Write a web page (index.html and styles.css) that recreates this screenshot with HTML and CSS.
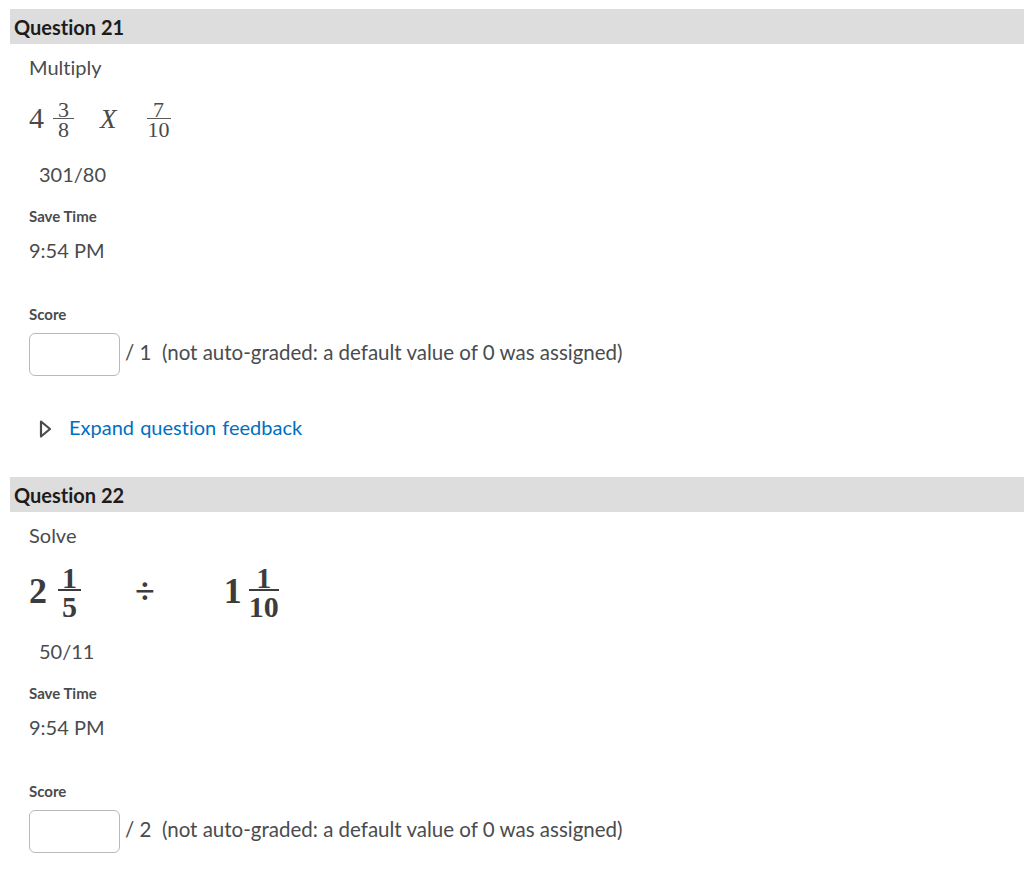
FILE: index.html
```html
<!DOCTYPE html>
<html>
<head>
<meta charset="utf-8">
<link rel="stylesheet" href="styles.css">
</head>
<body>
<div class="page">
  <section class="question q21">
    <h2 class="q-head">Question 21</h2>
    <div class="q-body">
      <p class="prompt">Multiply</p>
      <div class="math m21">
        <span class="whole">4</span>
        <span class="frac f-a"><span class="num">3</span><span class="den">8</span></span>
        <span class="op-x">X</span>
        <span class="frac f-b"><span class="num">7</span><span class="den">10</span></span>
      </div>
      <p class="answer">301/80</p>
      <p class="label label-save">Save Time</p>
      <p class="value">9:54 PM</p>
      <p class="label label-score">Score</p>
      <div class="score-row">
        <span class="score-input"></span>
        <span class="score-text">/ 1&nbsp; (not auto-graded: a default value of 0 was assigned)</span>
      </div>
      <div class="expand-row">
        <svg class="tri" width="14" height="20" viewBox="0 0 14 20"><path d="M3 2.5 L12 10 L3 17.5 Z" fill="none" stroke="#494c4e" stroke-width="2.2" stroke-linejoin="round"/></svg>
        <a class="expand-link" href="#">Expand question feedback</a>
      </div>
    </div>
  </section>
  <section class="question q22">
    <h2 class="q-head">Question 22</h2>
    <div class="q-body">
      <p class="prompt">Solve</p>
      <div class="math m22">
        <span class="whole">2</span>
        <span class="frac f-c"><span class="num">1</span><span class="den">5</span></span>
        <span class="op-div">÷</span>
        <span class="whole whole-b">1</span>
        <span class="frac f-d"><span class="num">1</span><span class="den">10</span></span>
      </div>
      <p class="answer answer-b">50/11</p>
      <p class="label label-save">Save Time</p>
      <p class="value">9:54 PM</p>
      <p class="label label-score">Score</p>
      <div class="score-row">
        <span class="score-input"></span>
        <span class="score-text">/ 2&nbsp; (not auto-graded: a default value of 0 was assigned)</span>
      </div>
    </div>
  </section>
</div>
</body>
</html>
```
FILE: styles.css
```css
html, body {
  margin: 0;
  padding: 0;
  background: #ffffff;
}
body {
  font-family: Lato, "Open Sans", sans-serif;
  color: #494c4e;
  font-variant-ligatures: none;
}
.page {
  padding: 9px 0 0 10px;
}
p, h2 {
  margin: 0;
}
.q-head {
  background: #dddddd;
  height: 34px;
  padding-top: 1px;
  line-height: 35px;
  padding-left: 4px;
  font-size: 20px;
  font-weight: 700;
  color: #1c1c1c;
}
.q-body {
  padding-left: 19px;
}
.prompt {
  font-size: 20px;
  line-height: 24px;
  margin-top: 11px;
}
.math {
  display: flex;
  align-items: flex-start;
  font-family: "Liberation Serif", "Times New Roman", serif;
}
.frac {
  display: inline-flex;
  flex-direction: column;
  align-items: center;
}

/* Question 21 expression */
.m21 {
  margin-top: 23px;
  height: 37px;
  color: #4a4a4a;
}
.m21 .whole {
  font-size: 30px;
  line-height: 22px;
  margin-top: 5px;
}
.m21 .frac .num {
  font-size: 22px;
  line-height: 16px;
  align-self: stretch;
  text-align: center;
  border-bottom: 1px solid #5a5a5a;
}
.m21 .frac .den {
  font-size: 22px;
  line-height: 18px;
  padding-top: 2px;
}
.f-a {
  margin-left: 9px;
  padding: 0 5px;
}
.f-a .num { margin: 0 -5px; }
.op-x {
  font-style: italic;
  font-size: 27px;
  line-height: 22px;
  margin-top: 6px;
  margin-left: 26px;
}
.f-b {
  margin-left: 30px;
  padding: 0 1px;
}
.f-b .num { margin: 0 -1px; }

/* Question 22 expression */
.m22 {
  margin-top: 20px;
  height: 53px;
  color: #3c3c3c;
  font-weight: 700;
}
.m22 .whole {
  font-size: 36px;
  line-height: 30px;
  margin-top: 9px;
}
.m22 .frac .num {
  font-size: 30px;
  line-height: 22px;
  align-self: stretch;
  text-align: center;
  border-bottom: 2px solid #3c3c3c;
}
.m22 .frac .den {
  font-size: 30px;
  line-height: 26px;
  padding-top: 3px;
}
.f-c {
  margin-left: 11px;
  padding: 0 4px;
}
.f-c .num { margin: 0 -4px; }
.op-div {
  font-size: 36px;
  line-height: 30px;
  margin-top: 9px;
  margin-left: 54px;
}
.m22 .whole-b {
  margin-left: 69px;
}
.f-d {
  margin-left: 7px;
}

.answer {
  font-size: 20px;
  line-height: 24px;
  margin-top: 23px;
  padding-left: 10px;
}
.answer-b {
  margin-top: 19px;
}
.label {
  font-size: 15px;
  line-height: 18px;
  font-weight: 700;
}
.label-save {
  margin-top: 21px;
}
.value {
  font-size: 20px;
  line-height: 24px;
  margin-top: 13px;
}
.label-score {
  margin-top: 43px;
}
.score-row {
  display: flex;
  align-items: center;
  margin-top: 10px;
  height: 43px;
}
.score-input {
  box-sizing: border-box;
  width: 91px;
  height: 43px;
  border: 1px solid #b9b9b9;
  border-radius: 6px;
  background: #fff;
}
.score-text {
  font-size: 20.5px;
  line-height: 24px;
  margin-left: 5px;
  margin-bottom: 5px;
}
.expand-row {
  display: flex;
  align-items: center;
  margin-top: 39px;
  height: 24px;
}
.tri {
  margin-left: 9px;
  margin-top: 4px;
}
.expand-link {
  font-size: 20px;
  line-height: 24px;
  color: #006fbf;
  text-decoration: none;
  margin-left: 17px;
  word-spacing: 1px;
}
.q22 {
  margin-top: 38px;
}
```
